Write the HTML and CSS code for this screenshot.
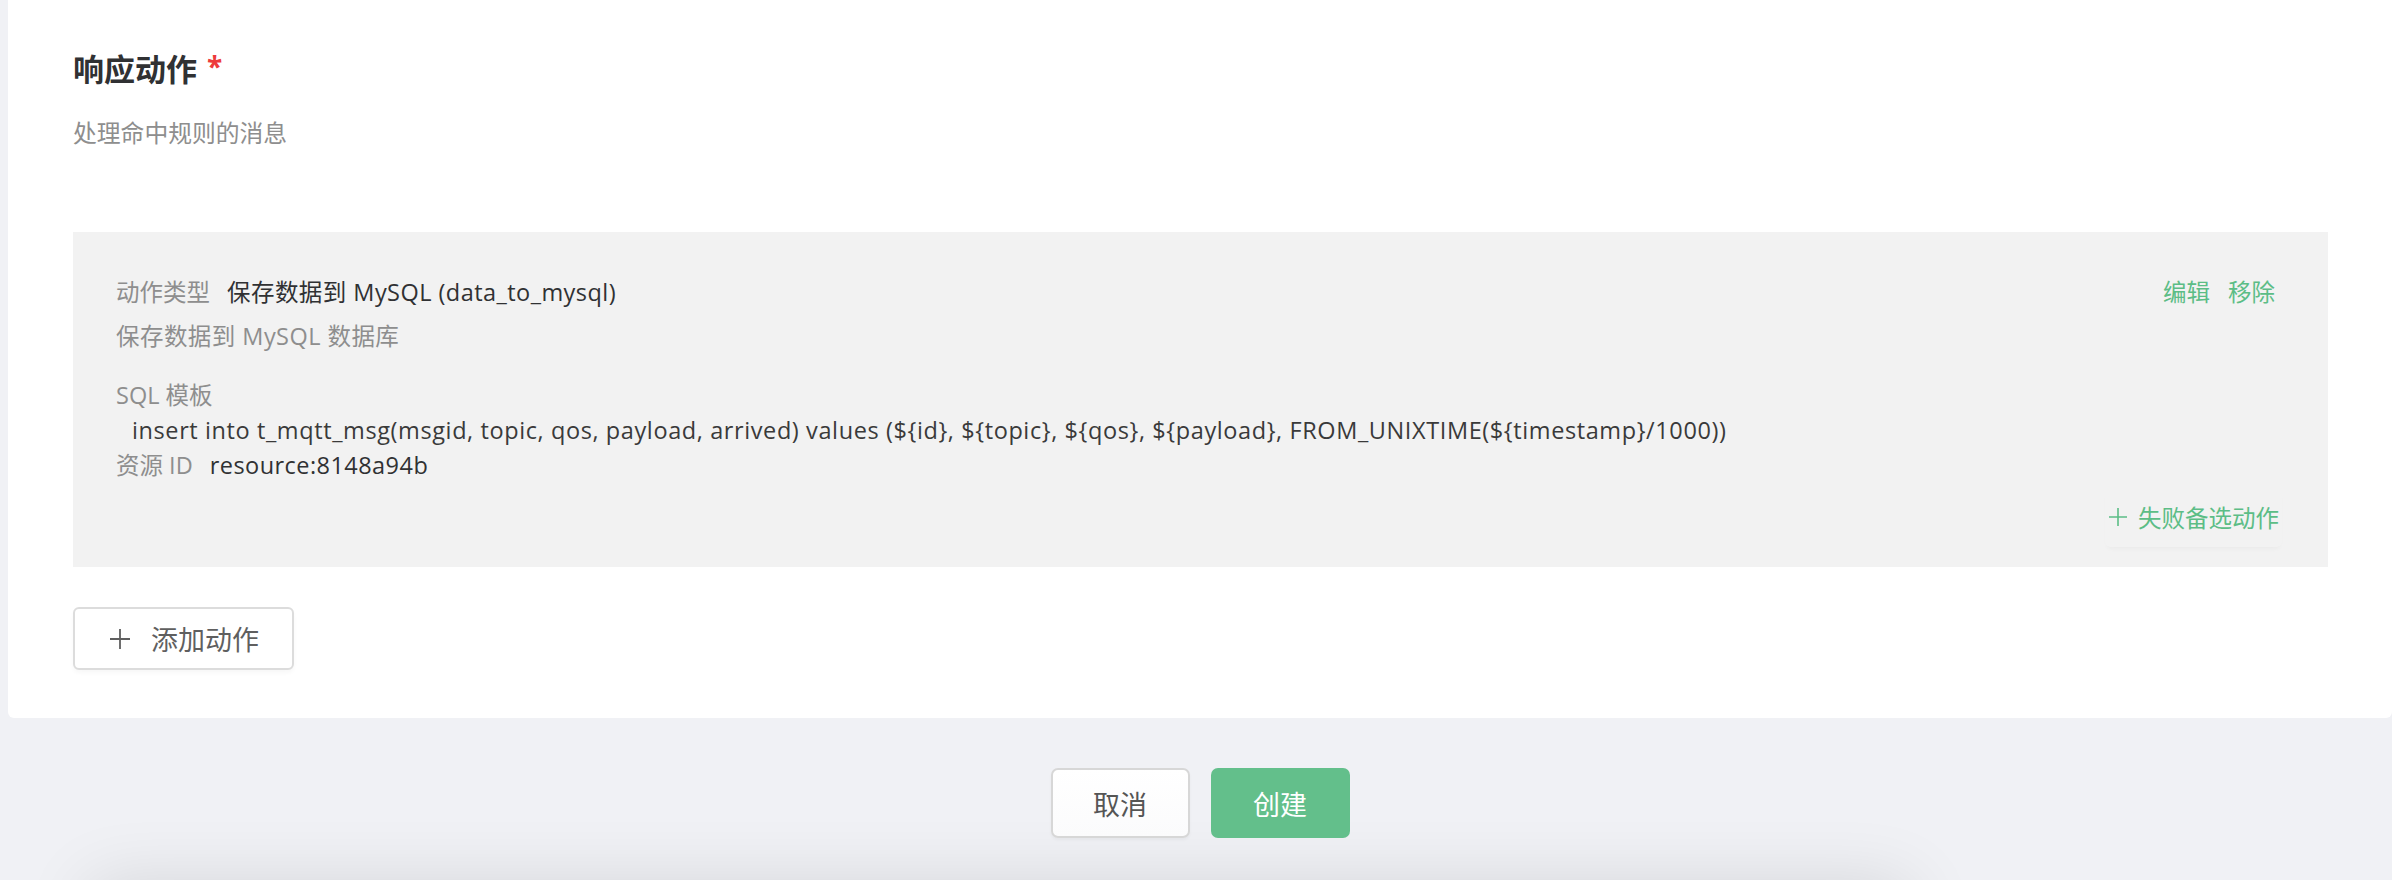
FILE: index.html
```html
<!DOCTYPE html>
<html lang="zh-CN">
<head>
<meta charset="utf-8">
<title>响应动作</title>
<link rel="stylesheet" href="styles.css">
</head>
<body>
<div class="page">
  <section class="card">
    <h2 class="sec-title">响应动作 <span class="req">*</span></h2>
    <p class="sec-desc">处理命中规则的消息</p>

    <div class="action-box">
      <div class="action-head">
        <div class="action-info">
          <div class="row"><span class="label">动作类型</span><span class="val">保存数据到 MySQL (data_to_mysql)</span></div>
          <div class="desc">保存数据到 MySQL 数据库</div>
        </div>
        <div class="ops"><a class="link">编辑</a><a class="link">移除</a></div>
      </div>
      <div class="params">
        <div class="label">SQL 模板</div>
        <div class="code">insert into t_mqtt_msg(msgid, topic, qos, payload, arrived) values (${id}, ${topic}, ${qos}, ${payload}, FROM_UNIXTIME(${timestamp}/1000))</div>
        <div class="row"><span class="label">资源 ID</span><span class="val">resource:8148a94b</span></div>
      </div>
      <div class="fallback">
        <button class="fb-btn"><svg class="plus" viewBox="0 0 20 20" width="20" height="20"><path d="M10 1v18M1 10h18" stroke="currentColor" stroke-width="1.6" fill="none"/></svg><span>失败备选动作</span></button>
      </div>
    </div>

    <button class="add-btn"><svg class="plus" viewBox="0 0 22 22" width="22" height="22"><path d="M11 1v20M1 11h20" stroke="currentColor" stroke-width="1.8" fill="none"/></svg><span>添加动作</span></button>
  </section>

  <div class="footer-btns">
    <button class="btn cancel">取消</button>
    <button class="btn primary">创建</button>
  </div>
  <div class="footer-shadow"></div>
</div>
</body>
</html>
```

FILE: styles.css
```css
* { box-sizing: border-box; }
html, body {
  margin: 0;
  padding: 0;
  background: #f0f1f5;
}
body {
  font-family: "Open Sans", "Noto Sans CJK SC", sans-serif;
  color: #303133;
}
.page {
  height: 880px;
  overflow: hidden;
}
.card {
  margin-left: 8px;
  background: #fff;
  border-radius: 0 0 6px 6px;
  padding: 49px 64px 48px 65px;
}
.sec-title {
  margin: 0;
  font-size: 31px;
  line-height: 40px;
  font-weight: 700;
  color: #303133;
}
.req {
  color: #ed3b3b;
  font-size: 28px;
  vertical-align: top;
  position: relative;
  top: -3px;
  left: 2px;
}
.sec-desc {
  margin: 27px 0 0;
  font-size: 23.8px;
  line-height: 34px;
  color: #8e8e8e;
}
.action-box {
  margin-top: 82px;
  background: #f2f2f2;
  padding: 38px 46px 20px 43px;
}
.action-head {
  display: flex;
  justify-content: space-between;
  align-items: flex-start;
}
.row {
  display: flex;
  gap: 17px;
}
.action-info .row, .action-info .desc {
  font-size: 23.5px;
  line-height: 44px;
}
.action-info .val, .action-info .desc, .params .val { letter-spacing: 0.45px; }
.label { color: #8e8e8e; }
.val { color: #303133; }
.desc { color: #8e8e8e; }
.ops {
  display: flex;
  gap: 18px;
  margin-right: 7px;
  font-size: 23.5px;
  line-height: 44px;
}
.link { color: #5cbd86; cursor: pointer; }
.params {
  margin-top: 20px;
  font-size: 23.5px;
  line-height: 35px;
}
.code {
  padding-left: 16px;
  color: #3a3a3a;
  letter-spacing: 0.6px;
}
.fallback {
  display: flex;
  justify-content: flex-end;
  margin-top: 4px;
}
.fb-btn {
  display: flex;
  align-items: center;
  gap: 10px;
  height: 60px;
  padding: 0 3px;
  border: 0;
  background: transparent;
  border-radius: 6px;
  box-shadow: 0 4px 4px -2px rgba(0,0,0,0.03);
  font-family: inherit;
  font-size: 23.5px;
  color: #5cbd86;
}
.fb-btn .plus { width: 20px; height: 20px; }
.add-btn {
  display: flex;
  align-items: center;
  gap: 20px;
  margin-top: 40px;
  height: 63px;
  padding: 0 33px 0 34px;
  background: #fff;
  border: 2px solid #dcdcdc;
  border-radius: 6px;
  box-shadow: 0 3px 4px rgba(0,0,0,0.03);
  font-family: inherit;
  font-size: 27px;
  color: #5f5f5f;
}
.footer-btns {
  display: flex;
  justify-content: center;
  gap: 21px;
  margin: 50px 0 0 8px;
}
.btn {
  height: 70px;
  width: 139px;
  border-radius: 7px;
  font-family: inherit;
  font-size: 27px;
}
.cancel {
  background: linear-gradient(#ffffff, #fbfbfc);
  border: 2px solid #d7d7d7;
  color: #555;
  box-shadow: 0 2px 3px rgba(0,0,0,0.04);
}
.primary {
  background: #63bf8b;
  border: 0;
  color: #fff;
}
.footer-shadow {
  margin: 46px 0 0 90px;
  width: 1820px;
  height: 120px;
  background: #f0f1f5;
  box-shadow: 0 0 70px 0 rgba(0,0,0,0.12);
}
```
